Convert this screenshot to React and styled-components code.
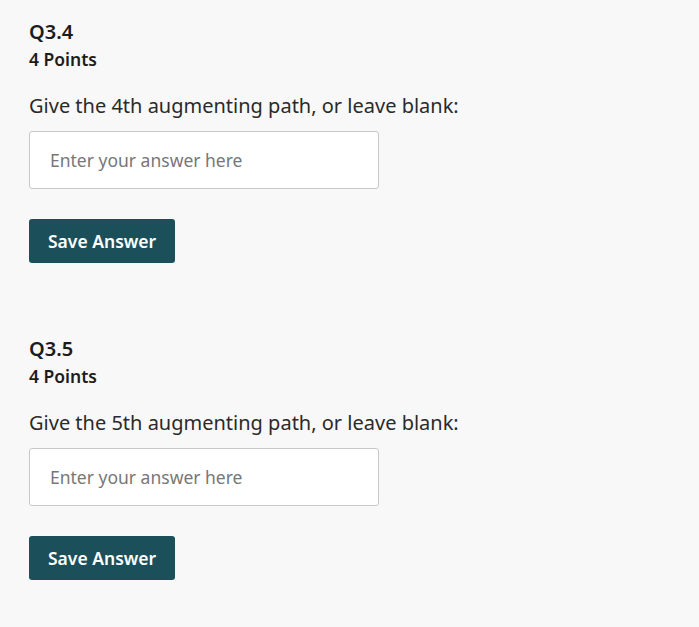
import React from "react";
import styled, { createGlobalStyle } from "styled-components";

const Global = createGlobalStyle`
  html, body { margin: 0; padding: 0; background: #f8f8f8; }
  body { font-family: "Noto Sans", "Open Sans", sans-serif; color: #1c1c1c; }
`;

const Page = styled.div`
  padding: 18px 29px 0;
  display: flex;
  flex-direction: column;
  gap: 72px;
`;

const Question = styled.section`
  display: flex;
  flex-direction: column;
`;

const Title = styled.h3`
  margin: 0;
  font-size: 20px;
  font-weight: 600;
  line-height: 28px;
`;

const Points = styled.div`
  font-size: 17.5px;
  font-weight: 600;
  line-height: 26px;
`;

const Prompt = styled.p`
  margin: 20px 0 0;
  font-size: 20px;
  line-height: 28px;
  color: #2a2a2a;
`;

const Input = styled.input`
  box-sizing: border-box;
  margin-top: 11px;
  width: 350px;
  height: 58px;
  padding: 0 20px;
  border: 1px solid #c8c8c8;
  border-radius: 3px;
  background: #fff;
  font-family: inherit;
  font-size: 17.5px;
  color: #222;
  &::placeholder { color: #777; }
`;

const Button = styled.button`
  box-sizing: border-box;
  margin-top: 30px;
  align-self: flex-start;
  height: 44px;
  padding: 0 19px;
  border: none;
  border-radius: 3px;
  background: #1b4f5a;
  color: #fff;
  font-family: inherit;
  font-size: 17.5px;
  font-weight: 600;
  cursor: pointer;
`;

const items = [
  { id: "Q3.4", n: "4th" },
  { id: "Q3.5", n: "5th" },
];

export default function App() {
  return (
    <>
      <Global />
      <Page>
        {items.map((q) => (
          <Question key={q.id}>
            <Title>{q.id}</Title>
            <Points>4 Points</Points>
            <Prompt>Give the {q.n} augmenting path, or leave blank:</Prompt>
            <Input placeholder="Enter your answer here" />
            <Button>Save Answer</Button>
          </Question>
        ))}
      </Page>
    </>
  );
}
